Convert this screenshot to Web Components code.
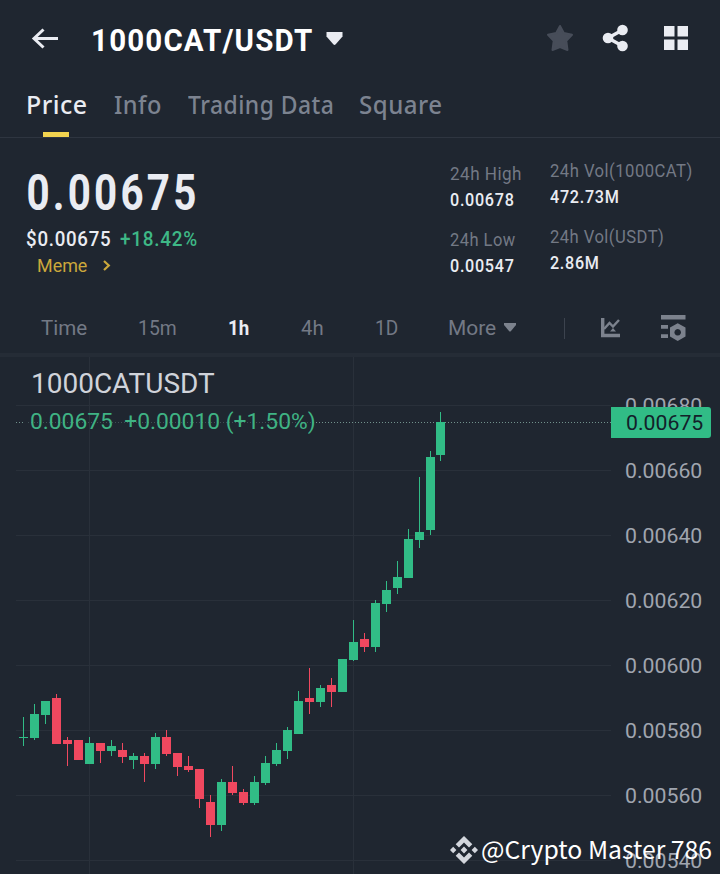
<!DOCTYPE html>
<html lang="en">
<head>
<meta charset="utf-8">
<title>1000CAT/USDT</title>
<style>
  body {
    margin: 0;
    background: #1f2630;
    font-family: Roboto, "Liberation Sans", sans-serif;
  }
</style>
</head>
<body>
<trading-page></trading-page>

<script>
const UP = "#31bc86";
const DOWN = "#f0485f";

const ctx = document.createElement("canvas").getContext("2d");

// One line of text squeezed or stretched to an exact ink width
class FitText extends HTMLElement {
  constructor() {
    super();
    this.attachShadow({ mode: "open" });
    this.shadowRoot.innerHTML = `
      <style>
        :host { display: flex; flex: none; }
        span { display: block; flex: none; white-space: pre; transform-origin: 0 50%; }
      </style>
      <span><slot></slot></span>
    `;
  }

  connectedCallback() {
    queueMicrotask(() => this.fit());
  }

  fit() {
    const width = Number(this.getAttribute("w"));
    const css = getComputedStyle(this);
    const text = this.textContent;
    const spacing = parseFloat(css.letterSpacing) || 0;
    ctx.font = `${css.fontWeight} ${css.fontSize} ${css.fontFamily}`;
    const m = ctx.measureText(text);
    const ink = m.actualBoundingBoxLeft + m.actualBoundingBoxRight + spacing * (text.length - 1);
    this.style.width = `${width}px`;
    this.shadowRoot.querySelector("span").style.transform =
      `scaleX(${width / ink}) translateX(${m.actualBoundingBoxLeft}px)`;
  }
}

class PairHeader extends HTMLElement {
  constructor() {
    super();
    this.attachShadow({ mode: "open" });
    this.shadowRoot.innerHTML = `
      <style>
        :host { display: flex; align-items: center; height: 77px; padding: 0 32px 0 31px; box-sizing: border-box; }
        svg { display: block; flex: none; }
        fit-text { font-size: 31px; font-weight: 700; letter-spacing: 1.2px; line-height: 80px; color: #fff; margin: 4px 14px 0 34px; }
        .actions { display: flex; align-items: center; margin: -1px 0 0 auto; }
        .share { margin: 0 35px 0 28px; }
      </style>
      <svg width="28" height="22" viewBox="0 0 28 22" fill="none" stroke="#eaecf2" stroke-width="3">
        <path d="M12.5 1.5 3 10.5 12.5 19.5M3 10.5H27"/>
      </svg>
      <fit-text w="219"></fit-text>
      <svg width="17" height="14" viewBox="0 0 17 14"><path d="M.5 0H16.500v4.5L9.700 12.3Q8.500 13.5 7.300 12.3L.5 4.5Z" fill="#eaecf2"/></svg>
      <div class="actions">
        <svg width="28" height="28" viewBox="0 0 28 28">
          <path d="M14 2 17.8 9 26 10.8 20.3 16.8 21.5 26 14 23 6.5 26 7.7 16.8 2 10.8 10.2 9Z"
            fill="#474d59" stroke="#474d59" stroke-width="2" stroke-linejoin="round"/>
        </svg>
        <svg class="share" width="27" height="28" viewBox="0 0 27 28" fill="#eaecf2">
          <path d="M20.5 6 6 14 20.5 22" fill="none" stroke="#eaecf2" stroke-width="3.4"/>
          <circle cx="20.5" cy="6" r="5.3"/><circle cx="6" cy="14" r="5.3"/><circle cx="20.5" cy="22" r="5.3"/>
        </svg>
        <svg width="24" height="24" viewBox="0 0 24 24" fill="#eaecf2">
          <path d="M0 0h10.5v10.5H0zM13.5 0H24v10.5H13.5zM0 13.5h10.5V24H0zM13.5 13.5H24V24H13.5z"/>
        </svg>
      </div>
    `;
    this.label = this.shadowRoot.querySelector("fit-text");
  }

  connectedCallback() {
    this.label.textContent = this.getAttribute("pair");
  }
}

class PageTab extends HTMLElement {
  constructor() {
    super();
    this.attachShadow({ mode: "open" });
    this.shadowRoot.innerHTML = `
      <style>
        :host { display: grid; grid-template-rows: 55px 5px; justify-items: center; color: #7c8390; }
        :host([active]) { color: #eaecf2; }
        fit-text { font: 500 24.5px/56px "Noto Sans", sans-serif; letter-spacing: .5px; }
        i { width: 26px; margin-left: -2px; }
        :host([active]) i { background: #f2d34f; }
      </style>
      <fit-text w="${this.getAttribute("w")}">${this.getAttribute("label")}</fit-text><i></i>
    `;
  }
}

class StatItem extends HTMLElement {
  constructor() {
    super();
    this.attachShadow({ mode: "open" });
    this.shadowRoot.innerHTML = `
      <style>
        :host { display: grid; grid-template-rows: 26px 26px; line-height: 26px; font-size: 18.3px; letter-spacing: .5px; }
        .label { color: #737985; }
        .value { color: #eaecf2; font-weight: 500; letter-spacing: .8px; }
      </style>
      <fit-text class="label" w="${this.getAttribute("lw")}">${this.getAttribute("label")}</fit-text>
      <fit-text class="value" w="${this.getAttribute("vw")}">${this.getAttribute("value")}</fit-text>
    `;
  }
}

class PriceSummary extends HTMLElement {
  constructor() {
    super();
    this.attachShadow({ mode: "open" });
    this.shadowRoot.innerHTML = `
      <style>
        :host { display: grid; grid-template-columns: 422px 100px 1fr; height: 162px; padding-left: 28px; box-sizing: border-box; }
        .main { padding-top: 30px; }
        .price { font-size: 50px; font-weight: 700; letter-spacing: 4px; line-height: 50px; color: #eaecf2; }
        .row { display: flex; align-items: center; gap: 10px; height: 24px; margin: 9px 0 0 -1px; font-size: 20.6px; letter-spacing: .8px; line-height: 24px; font-weight: 500; color: #eaecf2; }
        .up { color: #3eb886; }
        .tag { display: flex; align-items: center; gap: 15px; height: 28px; margin: 1px 0 0 10px; font-size: 18.6px; line-height: 28px; color: #cba83b; }
        .tag svg { margin-top: -1px; }
        .stats { display: grid; grid-auto-rows: 52px; gap: 14px; align-content: start; padding-top: 23px; }
        .stats.vol { padding-top: 20px; }
      </style>
      <div class="main">
        <fit-text class="price" w="167">0.00675</fit-text>
        <div class="row">
          <fit-text w="83">$0.00675</fit-text>
          <fit-text class="up" w="77">+18.42%</fit-text>
        </div>
        <div class="tag">
          <fit-text w="49.5">Meme</fit-text>
          <svg width="8" height="11" viewBox="0 0 8 11" fill="none" stroke="#cba83b" stroke-width="2.2"><path d="M1 1 5.8 5.5 1 10"/></svg>
        </div>
      </div>
      <div class="stats">
        <stat-item label="24h High" lw="70.5" value="0.00678" vw="63.5"></stat-item>
        <stat-item label="24h Low" lw="65.5" value="0.00547" vw="63.5"></stat-item>
      </div>
      <div class="stats vol">
        <stat-item label="24h Vol(1000CAT)" lw="142" value="472.73M" vw="68"></stat-item>
        <stat-item label="24h Vol(USDT)" lw="113.5" value="2.86M" vw="48"></stat-item>
      </div>
    `;
  }
}

class IntervalBar extends HTMLElement {
  constructor() {
    super();
    this.attachShadow({ mode: "open" });
    this.shadowRoot.innerHTML = `
      <style>
        :host { display: flex; align-items: center; height: 57px; padding: 3px 0 0 41px; box-sizing: border-box;
          border-bottom: 4px solid #252c36; font-size: 20.2px; line-height: 53px; color: #737985; }
        .on { color: #eaecf2; font-weight: 700; }
        svg { display: block; flex: none; }
        i { width: 1px; height: 21px; background: #3c434e; margin: 0 36px 0 48px; }
        .chart { margin-right: 40px; }
      </style>
      <fit-text w="45.5">Time</fit-text>
      <fit-text w="37" style="margin-left:52px">15m</fit-text>
      <fit-text w="20" class="on" style="margin-left:53px">1h</fit-text>
      <fit-text w="21.5" style="margin-left:52px">4h</fit-text>
      <fit-text w="22" style="margin-left:54px">1D</fit-text>
      <fit-text w="46.5" style="margin-left:51px">More</fit-text>
      <svg width="12" height="9" viewBox="0 0 12 9" style="margin:-2px 0 0 8px"><path d="M0 0H12V2L7 8Q6 9 5 8L0 2Z" fill="#7c828d"/></svg>
      <i></i>
      <svg class="chart" width="20" height="20" viewBox="0 0 20 20" fill="none" stroke="#7c828d">
        <path d="M1.7 0V17.5H19" stroke-width="3.4"/>
        <path d="M3 11 8.5 5 12 8.5 18 2" stroke-width="2.4"/>
        <path d="M12 10 15 13.500H9Z" fill="#7c828d" stroke="none"/>
      </svg>
      <svg width="25" height="27" viewBox="0 0 25 27" fill="#7c828d">
        <path d="M0 0H24.5V4.5H0zM0 10H7V13.8H0zM0 19.3H7V23H0z"/>
        <path fill-rule="evenodd" d="M16.7 8.3 24.5 12.6V21.5L16.7 26 9 21.5V12.6ZM16.7 14a3.3 3.3 0 1 0 .01 0Z"/>
      </svg>
    `;
  }
}

// Each candle: direction, body top, body bottom, wick top, wick bottom
const candles = [
  [1, 737, 738, 717, 746], [1, 714, 738, 704, 740], [1, 701, 715, 701, 724],
  [0, 698, 744, 694, 744], [0, 740, 744, 737, 766], [0, 740, 760, 740, 760],
  [1, 743, 764, 737, 764], [0, 743, 751, 743, 763], [1, 746, 751, 740, 756],
  [0, 750, 757, 743, 763], [1, 756, 760, 753, 769], [0, 756, 764, 753, 782],
  [1, 737, 764, 733, 769], [0, 737, 754, 730, 756], [0, 753, 767, 753, 776],
  [0, 766, 770, 756, 772], [0, 769, 799, 769, 808], [0, 802, 825, 795, 837],
  [1, 782, 825, 779, 831], [0, 782, 793, 766, 795], [0, 792, 803, 789, 805],
  [1, 782, 803, 776, 805], [1, 763, 783, 756, 785], [1, 750, 764, 743, 766],
  [1, 730, 751, 727, 759], [1, 701, 734, 691, 734], [0, 698, 702, 668, 714],
  [1, 688, 702, 685, 707], [0, 685, 692, 678, 707], [1, 659, 692, 659, 692],
  [1, 642, 660, 620, 661], [0, 639, 647, 633, 652], [1, 603, 647, 600, 652],
  [1, 590, 604, 581, 612], [1, 577, 588, 561, 594], [1, 539, 578, 529, 578],
  [1, 532, 540, 477, 548], [1, 457, 530, 451, 535], [1, 422, 455, 412, 461],
];
const CHART_TOP = 357;

class CandleChart extends HTMLElement {
  constructor() {
    super();
    this.attachShadow({ mode: "open" });
    this.render();
  }

  render() {
    let grid = "";
    for (let y = 405; y < 874; y += 65) grid += `<rect x="16" y="${y}" width="595" height="1"/>`;
    for (const x of [89, 353]) grid += `<rect x="${x}" y="${CHART_TOP}" width="1" height="517"/>`;

    const bars = candles.map(([up, top, bottom, high, low], i) => {
      const x = Math.min(19 + 11 * i, 436);
      return `<g fill="${up ? UP : DOWN}">
        <rect x="${x + 4}" y="${high}" width="1" height="${low - high}"/>
        <rect x="${x}" y="${top}" width="9" height="${bottom - top}"/></g>`;
    }).join("");

    const labels = ["0.00680", "0.00660", "0.00640", "0.00620", "0.00600", "0.00580", "0.00560", "0.00540"]
      .map((p) => `<fit-text w="75.5">${p}</fit-text>`).join("");

    this.shadowRoot.innerHTML = `
      <style>
        :host { display: grid; grid-template-columns: 611px 1fr; height: 517px; position: relative; overflow: hidden; }
        svg { position: absolute; inset: 0; }
        .legend { position: relative; padding: 13px 0 0 31px; }
        .name { font-size: 28px; line-height: 28px; color: #d0d3da; margin-left: 1.5px; }
        .last { font-size: 21.6px; line-height: 28px; color: #3fb384; margin: 10px 0 0 -.5px; }
        .axis { position: relative; display: grid; grid-auto-rows: 65px; align-content: start; padding: 17px 0 0 14.5px;
          font-size: 21px; line-height: 65px; color: #a0a5af; }
        .tag { position: absolute; left: 611px; top: 50px; width: 100px; height: 31px; padding-left: 15.5px; box-sizing: border-box;
          border-radius: 0 3px 3px 0; background: ${UP}; color: #13212a; font-size: 21px; line-height: 32px; }
      </style>
      <svg width="720" height="517" viewBox="0 ${CHART_TOP} 720 517" shape-rendering="crispEdges">
        <g fill="#29303a">${grid}</g>
        <g stroke="#71918c" stroke-dasharray="1 2">
          <path d="M16 422.5H25M316 422.5H611"/>
          <path d="M28 422.5H314" stroke-opacity=".4"/>
        </g>
        ${bars}
      </svg>
      <div class="legend">
        <fit-text class="name" w="182">1000CATUSDT</fit-text>
        <fit-text class="last" w="283">0.00675  +0.00010 (+1.50%)</fit-text>
      </div>
      <div class="axis">${labels}</div>
      <div class="tag"><fit-text w="75.5">0.00675</fit-text></div>
    `;
  }
}

class AuthorMark extends HTMLElement {
  constructor() {
    super();
    this.attachShadow({ mode: "open" });
    this.shadowRoot.innerHTML = `
      <style>
        :host { display: flex; align-items: center; gap: 4px; position: absolute; left: 450px; top: 834px; height: 32px; }
        svg { flex: none; }
        fit-text { font: 400 24.5px/32px "Noto Sans CJK SC", sans-serif; color: #fff; margin-top: -3px; }
      </style>
      <svg width="28" height="28" viewBox="0 0 28 28" fill="#d3d6dd">
        <path d="M14 0 22.3 8.3 19 11.6 14 6.6 9 11.6 5.7 8.3ZM14 28 5.7 19.7 9 16.4 14 21.4 19 16.4 22.3 19.7Z"/>
        <path d="M3.2 10.8 6.4 14 3.2 17.2 0 14ZM24.8 10.8 28 14 24.8 17.2 21.6 14ZM14 10.6 17.4 14 14 17.4 10.6 14Z"/>
      </svg>
      <fit-text w="229.5"></fit-text>
    `;
    this.label = this.shadowRoot.querySelector("fit-text");
  }

  connectedCallback() {
    this.label.textContent = this.getAttribute("name");
  }
}

class TradingPage extends HTMLElement {
  constructor() {
    super();
    this.attachShadow({ mode: "open" });
    this.shadowRoot.innerHTML = `
      <style>
        :host { display: flex; flex-direction: column; width: 720px; height: 874px; position: relative; overflow: hidden; }
        nav { display: flex; gap: 27.5px; height: 60px; padding-left: 28px; border-bottom: 1px solid #2e3540; }
      </style>
      <pair-header pair="1000CAT/USDT"></pair-header>
      <nav>
        <page-tab label="Price" w="58" active></page-tab>
        <page-tab label="Info" w="46.5"></page-tab>
        <page-tab label="Trading Data" w="145"></page-tab>
        <page-tab label="Square" w="81"></page-tab>
      </nav>
      <price-summary></price-summary>
      <interval-bar></interval-bar>
      <candle-chart></candle-chart>
      <author-mark name="@Crypto Master 786"></author-mark>
    `;
  }
}

customElements.define("fit-text", FitText);
customElements.define("pair-header", PairHeader);
customElements.define("page-tab", PageTab);
customElements.define("stat-item", StatItem);
customElements.define("price-summary", PriceSummary);
customElements.define("interval-bar", IntervalBar);
customElements.define("candle-chart", CandleChart);
customElements.define("author-mark", AuthorMark);
customElements.define("trading-page", TradingPage);
</script>
</body>
</html>
